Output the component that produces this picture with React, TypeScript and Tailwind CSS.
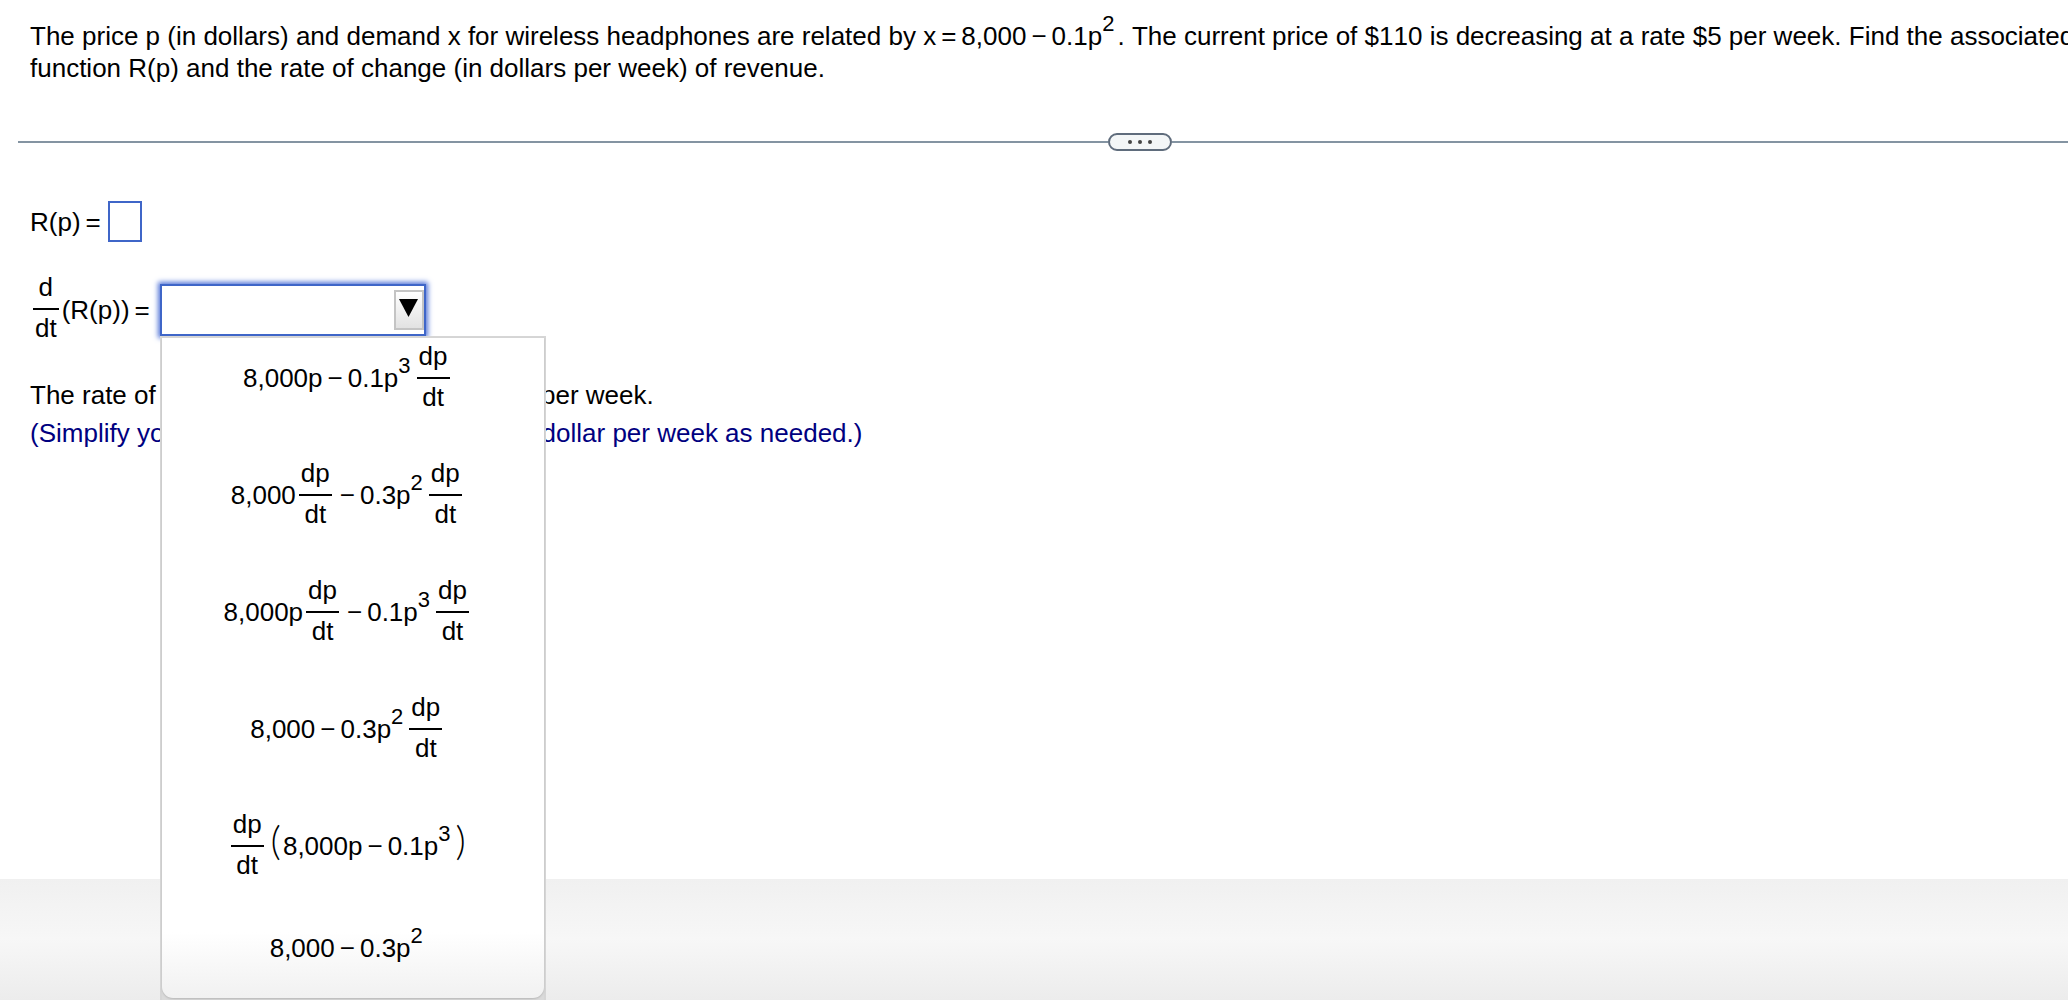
import { ReactNode, useState } from "react";

const Op = ({ children }: { children: ReactNode }) => (
  <span className="mx-[5px]">{children}</span>
);

const Sup = ({ children }: { children: ReactNode }) => (
  <sup className="static mr-[3px] align-[14px] text-[22px]">{children}</sup>
);

const Fraction = ({ top, bottom }: { top: string; bottom: string }) => (
  <span className="mx-[3px] inline-flex flex-col pb-1 text-center leading-[30px]">
    <span className="border-b-2 border-black px-[2px] pb-[6px]">{top}</span>
    <span className="px-[2px] pt-[3px]">{bottom}</span>
  </span>
);

const Paren = ({ children }: { children: ReactNode }) => (
  <span className="mx-[2px] font-[Lato,sans-serif] text-[40px] leading-[0] font-light">
    {children}
  </span>
);

const dpdt = <Fraction top="dp" bottom="dt" />;

const choices: { value: string; math: ReactNode }[] = [
  {
    value: "8,000p − 0.1p³ dp/dt",
    math: (
      <>
        <span>
          8,000p<Op>−</Op>0.1p<Sup>3</Sup>
        </span>
        {dpdt}
      </>
    ),
  },
  {
    value: "8,000 dp/dt − 0.3p² dp/dt",
    math: (
      <>
        <span>8,000</span>
        {dpdt}
        <span>
          <Op>−</Op>0.3p<Sup>2</Sup>
        </span>
        {dpdt}
      </>
    ),
  },
  {
    value: "8,000p dp/dt − 0.1p³ dp/dt",
    math: (
      <>
        <span>8,000p</span>
        {dpdt}
        <span>
          <Op>−</Op>0.1p<Sup>3</Sup>
        </span>
        {dpdt}
      </>
    ),
  },
  {
    value: "8,000 − 0.3p² dp/dt",
    math: (
      <>
        <span>
          8,000<Op>−</Op>0.3p<Sup>2</Sup>
        </span>
        {dpdt}
      </>
    ),
  },
  {
    value: "dp/dt (8,000p − 0.1p³)",
    math: (
      <>
        {dpdt}
        <span className="ml-[2px]">
          <Paren>(</Paren>8,000p<Op>−</Op>0.1p<Sup>3</Sup>
          <Paren>)</Paren>
        </span>
      </>
    ),
  },
  {
    value: "8,000 − 0.3p²",
    math: (
      <span>
        8,000<Op>−</Op>0.3p<Sup>2</Sup>
      </span>
    ),
  },
];

const DerivativeSelect = () => {
  const [value, setValue] = useState("");
  const [open, setOpen] = useState(true);

  const choose = (v: string) => {
    setValue(v);
    setOpen(false);
  };

  return (
    <div className="relative ml-[5px] h-[52px] w-[266px]">
      <select
        id="derivative"
        value={value}
        onChange={(e) => choose(e.target.value)}
        className="h-full w-full appearance-none border-2 border-[#3f66c8] bg-white px-2 shadow-[0_0_5px_2px_#5577d8] outline-none"
      >
        <option value=""></option>
        {choices.map((c) => (
          <option key={c.value} value={c.value} label={c.value} />
        ))}
      </select>
      <button
        type="button"
        aria-label="Toggle choices"
        onClick={() => setOpen(!open)}
        className="absolute top-[6px] right-[2px] flex h-10 w-[30px] justify-center border-2 border-[#c4c4c4] bg-linear-to-b from-white to-[#e2e2e2] pt-[7px]"
      >
        <svg width="19" height="18" viewBox="0 0 19 18" aria-hidden="true">
          <path d="M0 0h19L9.500 18z" fill="#000" />
        </svg>
      </button>

      {open && (
        <div className="absolute top-full left-0 z-10 w-[386px] border-2 border-b-0 border-[#d6d6d6] bg-[#dadada] pb-2">
          <ul className="flex flex-col gap-[42px] rounded-b-[11px] bg-white bg-linear-to-b from-white from-90% to-[#f1f1f1] pt-[3px] pr-[10px] pb-7 shadow-[0_1px_2px_#b8b8b8]">
            {choices.map((c) => (
              <li key={c.value}>
                <button
                  type="button"
                  onClick={() => choose(c.value)}
                  className="flex min-h-[44px] w-full items-center justify-center leading-[30px] whitespace-nowrap"
                >
                  {c.math}
                </button>
              </li>
            ))}
          </ul>
        </div>
      )}
    </div>
  );
};

const App = () => {
  return (
    <div className="flex min-h-screen flex-col overflow-hidden bg-white font-['Liberation_Sans',Arial,sans-serif] text-[26px] text-black">
      <main className="flex-1 pt-5">
        <p className="pl-[30px] leading-8 whitespace-nowrap [font-kerning:none]">
          The price p (in dollars) and demand x for wireless headphones are
          related by x<Op>=</Op>8,000<Op>−</Op>0.1p<Sup>2</Sup>. The current
          price of $110 is decreasing at a rate $5 per week. Find the associated
          <br />
          function R(p) and the rate of change (in dollars per week) of revenue.
        </p>

        {/* Divider with the expand handle */}
        <div className="mt-[49px] flex items-center pl-[18px]">
          <div className="h-[2px] flex-[549] bg-[#8494a2]" />
          <button
            type="button"
            aria-label="Resize question"
            className="flex h-[18px] w-16 items-center justify-center gap-[6px] rounded-[9px] border-2 border-[#5f6c7c] bg-[#f3f6f7]"
          >
            <span className="size-1 rounded-full bg-[#444]" />
            <span className="size-1 rounded-full bg-[#444]" />
            <span className="size-1 rounded-full bg-[#444]" />
          </button>
          <div className="h-[2px] flex-[451] bg-[#8494a2]" />
        </div>

        <form className="mt-[50px] pl-[30px]">
          <div className="flex items-center leading-[30px]">
            <label htmlFor="revenue">
              R(p)<Op>=</Op>
            </label>
            <input
              id="revenue"
              type="text"
              className="ml-[2px] h-[41px] w-[34px] border-2 border-[#3f66c8] bg-white text-center outline-none"
            />
          </div>

          <div className="mt-[30px] flex items-center leading-[30px]">
            <label htmlFor="derivative" className="flex items-center">
              <Fraction top="d" bottom="dt" />
              <span>
                (R(p))<Op>=</Op>
              </span>
            </label>
            <DerivativeSelect />
          </div>

          <div className="mt-[29px] leading-[38px] whitespace-nowrap">
            <p className="flex">
              <span className="w-[511px]">The rate of</span>
              <span>per week.</span>
            </p>
            <p className="text-[#000080]">
              (Simplify your answer. Round to the nearest dollar per week as
              needed.)
            </p>
          </div>
        </form>
      </main>

      <footer className="h-[121px] bg-linear-to-b from-[#f0f0f0] via-[#f7f7f7] to-[#ececec]" />
    </div>
  );
};

export default App;
